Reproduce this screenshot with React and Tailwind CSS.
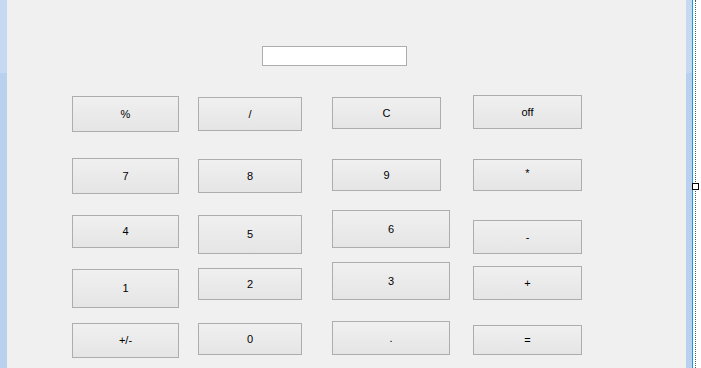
export default function App() {
    const btn =
        "flex items-center justify-center border border-[#adadad] bg-gradient-to-b from-[#f0f0f0] to-[#e5e5e5] text-[11px] text-black";

    return (
        <div className="flex h-[368px] w-[701px] overflow-hidden bg-[#f0f0f0] font-['Liberation_Sans',Arial,sans-serif]">
            {/* left window frame */}
            <div className="flex w-[7px] shrink-0 flex-col">
                <div className="h-[73px] bg-[#c5d9f1]" />
                <div className="flex-1 bg-[#b9d1ee]" />
            </div>

            {/* form client area */}
            <div className="flex w-[679px] shrink-0 flex-col">
                <div className="ml-[255px] mt-[46px] h-[20px] w-[145px] border border-[#adadad] bg-white" />

                <div className="ml-[65px] flex items-start">
                    <div className="flex w-[107px] flex-col">
                        <div className={`${btn} mt-[30px] h-[36px]`}>%</div>
                        <div className={`${btn} mt-[26px] h-[36px]`}>7</div>
                        <div className={`${btn} mt-[21px] h-[33px]`}>4</div>
                        <div className={`${btn} mt-[21px] h-[39px]`}>1</div>
                        <div className={`${btn} mt-[15px] h-[35px]`}>+/-</div>
                    </div>

                    <div className="ml-[19px] flex w-[104px] flex-col">
                        <div className={`${btn} mt-[31px] h-[34px]`}>/</div>
                        <div className={`${btn} mt-[28px] h-[34px]`}>8</div>
                        <div className={`${btn} mt-[22px] h-[39px]`}>5</div>
                        <div className={`${btn} mt-[14px] h-[32px]`}>2</div>
                        <div className={`${btn} mt-[23px] h-[32px]`}>0</div>
                    </div>

                    <div className="ml-[30px] flex w-[118px] flex-col items-start">
                        <div className={`${btn} mt-[31px] h-[32px] w-[109px]`}>C</div>
                        <div className={`${btn} mt-[30px] h-[32px] w-[109px]`}>9</div>
                        <div className={`${btn} mt-[19px] h-[38px] w-[118px]`}>6</div>
                        <div className={`${btn} mt-[14px] h-[38px] w-[118px]`}>3</div>
                        <div className={`${btn} mt-[21px] h-[34px] w-[118px]`}>.</div>
                    </div>

                    <div className="ml-[23px] flex w-[109px] flex-col">
                        <div className={`${btn} mt-[29px] h-[34px]`}>off</div>
                        <div className={`${btn} mt-[30px] h-[32px] pb-[3px] text-[10px]`}>*</div>
                        <div className={`${btn} mt-[29px] h-[34px]`}>-</div>
                        <div className={`${btn} mt-[12px] h-[34px]`}>+</div>
                        <div className={`${btn} mt-[25px] h-[30px]`}>=</div>
                    </div>
                </div>
            </div>

            {/* right window frame + designer selection */}
            <div className="flex w-[6px] shrink-0 flex-col">
                <div className="h-[73px] bg-[#c5d9f1]" />
                <div className="flex-1 bg-[#b9d1ee]" />
            </div>
            <div className="relative w-[1px] shrink-0 bg-[#1a9fe3]">
                <div className="absolute left-0 top-[183px] z-10 h-[7px] w-[7px] border border-black bg-white" />
            </div>
            <div className="flex w-[8px] shrink-0 bg-white pl-[2px]">
                <div className="h-full w-0 border-l border-dotted border-[#555]" />
            </div>
        </div>
    );
}
